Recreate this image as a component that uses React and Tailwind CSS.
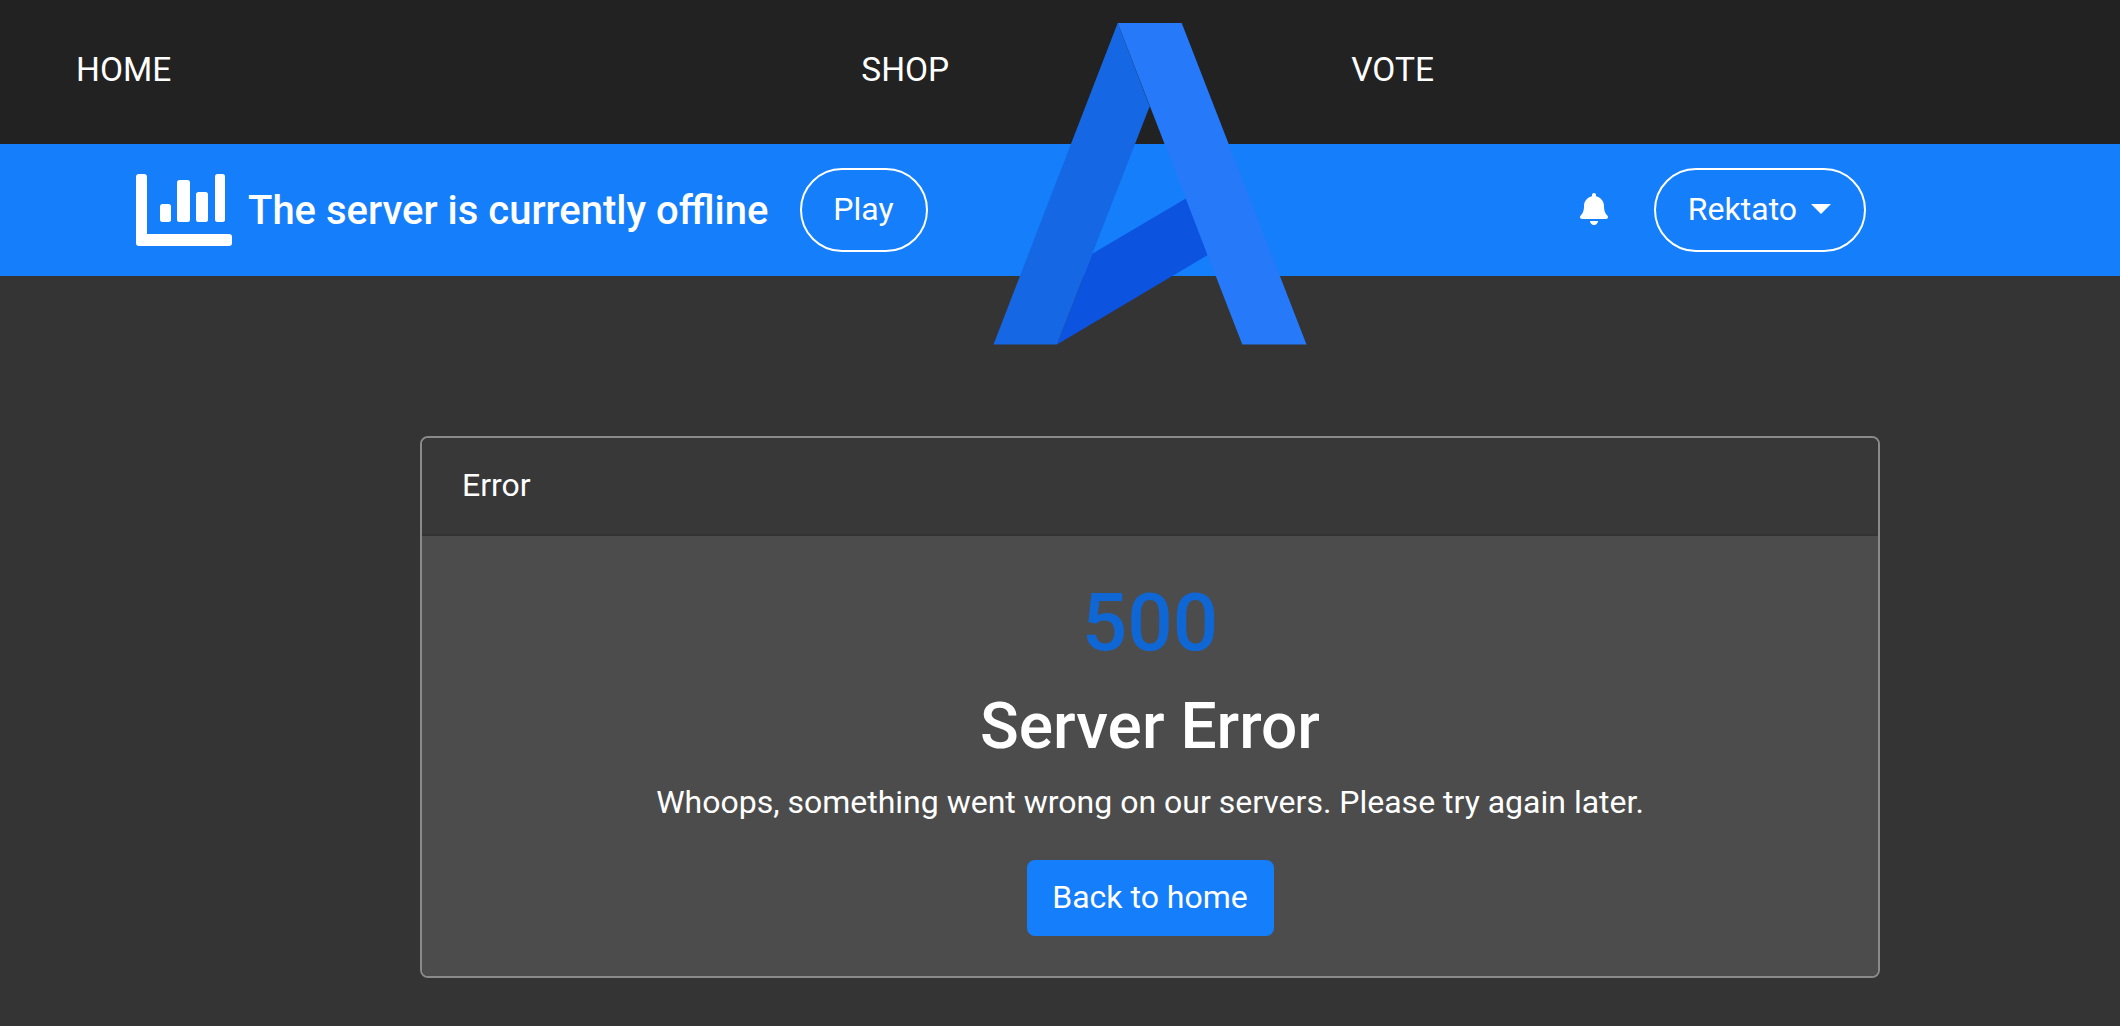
import React from "react";
import { FaBell } from "react-icons/fa";

const Logo = () => (
  <svg
    className="absolute left-[993px] top-[23px] w-[314px] h-[322px]"
    viewBox="0 0 314 322"
  >
    <polygon points="99.3,230.7 193.3,175.3 214.7,232 64,321.5" fill="#0c53e0" />
    <polygon points="124.7,0 156.7,83.3 64,321.5 0.5,321.5" fill="#1567e4" />
    <polygon points="124.7,0 188.7,0 313.5,321.5 249.3,321.5" fill="#2679f9" />
  </svg>
);

const ChartIcon = () => (
  <svg className="w-[96px] h-[72px] shrink-0" viewBox="0 0 96 72" fill="#fff">
    <path d="M3 0h5a3 3 0 0 1 3 3v57h82a3 3 0 0 1 3 3v6a3 3 0 0 1-3 3H3a3 3 0 0 1-3-3V3a3 3 0 0 1 3-3z" />
    <rect x="24" y="30" width="11" height="18" rx="2.5" />
    <rect x="41" y="6" width="13" height="42" rx="2.5" />
    <rect x="60" y="18" width="12" height="30" rx="2.5" />
    <rect x="79" y="0" width="10" height="48" rx="2.5" />
  </svg>
);

const App = () => {
  return (
    <div className="relative min-h-[1026px] bg-[#343434] overflow-hidden font-['Roboto',sans-serif] text-white">
      <nav className="h-[144px] bg-[#222222] flex items-center pb-[3px] text-[33.5px]">
        <a className="ml-[76px]">HOME</a>
        <a className="ml-[690px]">SHOP</a>
        <a className="ml-[402px]">VOTE</a>
      </nav>

      <div className="h-[132px] bg-[#157efb] flex items-center pl-[136px]">
        <ChartIcon />
        <span className="ml-[16px] pt-[2px] text-[40px] font-medium">
          The server is currently offline
        </span>
        <button className="ml-[32px] w-[128px] h-[84px] pr-[2px] pb-[2px] rounded-[42px] border-2 border-white text-[32px]">
          Play
        </button>
        <FaBell className="ml-[650px] mb-[2px] text-[32px]" />
        <button className="ml-[44px] w-[212px] h-[84px] pr-[2px] pb-[2px] rounded-[42px] border-2 border-white text-[32px] flex items-center justify-center">
          Rektato
          <span className="ml-[14px] w-0 h-0 border-x-[10px] border-x-transparent border-t-[10px] border-t-white" />
        </button>
      </div>

      <main className="pt-[160px] pl-[420px]">
        <div className="w-[1460px] h-[542px] rounded-[8px] border-2 border-[#8a8a8a] overflow-hidden flex flex-col">
          <div className="h-[98px] bg-[#383838] border-b-2 border-[#333333] flex items-center pl-[40px] pb-[2px] text-[32px]">
            Error
          </div>
          <div className="flex-1 bg-[#4c4c4c] flex flex-col items-center pt-[39px]">
            <h2 className="text-[80px] leading-[96px] font-medium text-[#0f67d6]">500</h2>
            <h1 className="mt-[17px] text-[64px] leading-[77px] font-medium">Server Error</h1>
            <p className="mt-[13px] text-[32px] leading-[48px]">
              Whoops, something went wrong on our servers. Please try again later.
            </p>
            <a className="mt-[34px] w-[247px] h-[76px] pb-[2px] rounded-[8px] bg-[#157efb] flex items-center justify-center text-[32px]">
              Back to home
            </a>
          </div>
        </div>
      </main>

      <Logo />
    </div>
  );
};

export default App;
